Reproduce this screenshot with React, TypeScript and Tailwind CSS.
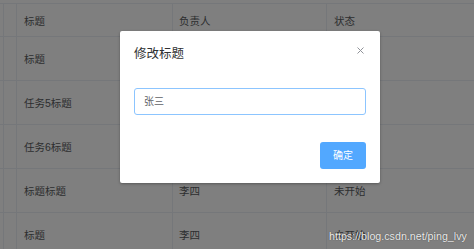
import React from "react";

const rows = [
  { title: "标题", owner: "", status: "" },
  { title: "任务5标题", owner: "", status: "" },
  { title: "任务6标题", owner: "", status: "" },
  { title: "标题标题", owner: "李四", status: "未开始" },
  { title: "标题", owner: "李四", status: "未开始" },
];

const font = "font-['Liberation_Sans','Noto_Sans_CJK_SC',sans-serif]";

const Row = ({ cells, h }: { cells: string[]; h: string }) => (
  <div className={`grid grid-cols-[4px_13px_156px_154px_1fr] border-b border-[#ebeef5] ${h}`}>
    <div className="border-r border-[#ebeef5]" />
    <div className="border-r border-[#ebeef5]" />
    <div className="flex items-center pl-[7px] pt-[3px] border-r border-[#ebeef5]">{cells[0]}</div>
    <div className="flex items-center pl-[6px] pt-[3px] border-r border-[#ebeef5]">{cells[1]}</div>
    <div className="flex items-center pl-[7px] pt-[3px]">{cells[2]}</div>
  </div>
);

export default function App() {
  return (
    <div className={`relative w-[474px] h-[249px] overflow-hidden bg-white ${font}`}>
      {/* table behind */}
      <div className="flex flex-col text-[10.5px] text-[#5a5c60]">
        <div className="h-[4px] border-b border-[#ebeef5]" />
        <Row cells={["标题", "负责人", "状态"]} h="h-[33px]" />
        {rows.map((r, i) => (
          <Row key={i} cells={[r.title, r.owner, r.status]} h="h-[44px]" />
        ))}
      </div>

      {/* mask */}
      <div className="absolute inset-0 bg-black/50" />

      {/* dialog */}
      <div className="absolute left-[120px] top-[31px] w-[260px] h-[152px] bg-white rounded-[2px] shadow-[0_1px_3px_rgba(0,0,0,0.3)] pt-[15px] pl-[14px] pr-[14px] flex flex-col">
        <div className="flex justify-between items-start h-[16px]">
          <span className="text-[12.5px] leading-[16px] text-[#303133]">修改标题</span>
          <svg width="7" height="7" viewBox="0 0 7 7" className="mt-[1px] mr-[2px]">
            <path d="M0.5 0.5L6.5 6.5M6.5 0.5L0.5 6.5" stroke="#909399" strokeWidth="1" />
          </svg>
        </div>
        <div className="mt-[26px] h-[27px] w-[232px] border border-[#8cc5ff] rounded-[3px] flex items-center pl-[9px] text-[10px] text-[#606266]">
          张三
        </div>
        <div className="mt-[27px] flex justify-end">
          <button className="w-[46px] h-[27px] rounded-[3px] bg-[#52a8ff] text-white text-[10px] flex items-center justify-center">
            确定
          </button>
        </div>
      </div>

      {/* watermark */}
      <div className="absolute left-[329px] top-[229px] text-[10.7px] leading-[14px] text-[#ececec] [text-shadow:0_0_1px_rgba(0,0,0,0.6)] font-['Liberation_Sans',sans-serif]">
        https://blog.csdn.net/ping_lvy
      </div>
    </div>
  );
}
